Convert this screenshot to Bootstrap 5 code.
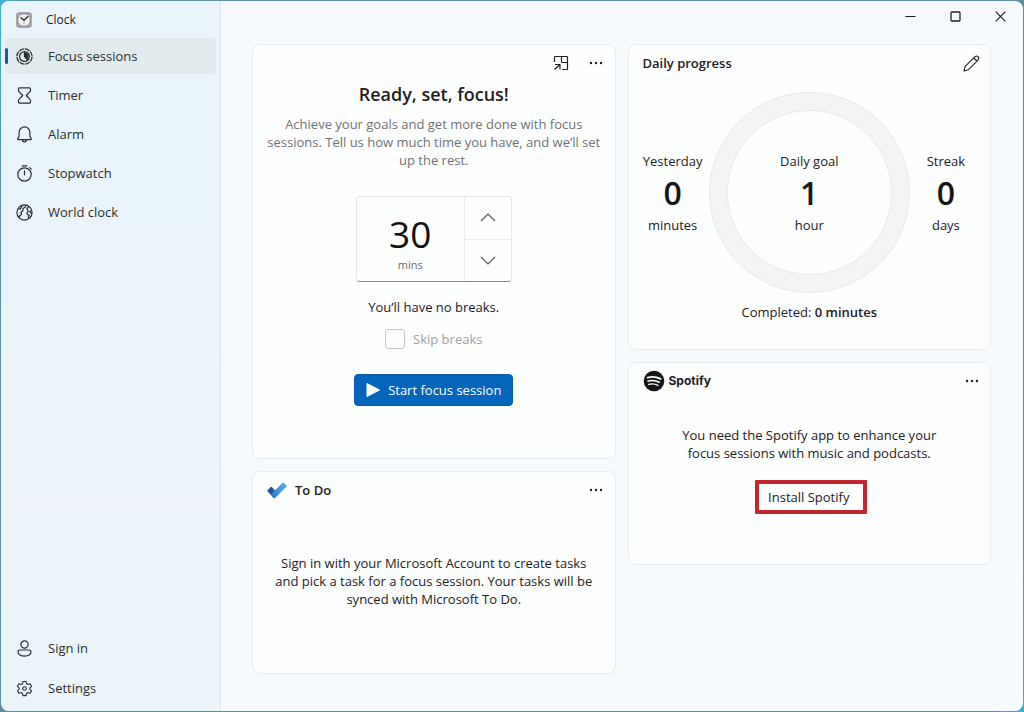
<!DOCTYPE html>
<html lang="en">
<head>
<meta charset="utf-8">
<meta name="viewport" content="width=device-width, initial-scale=1">
<title>Clock</title>
<link href="https://cdn.jsdelivr.net/npm/bootstrap@5.3.0/dist/css/bootstrap.min.css" rel="stylesheet">
<style>
  body { background: linear-gradient(100deg, #3fb3cf 0, #5a8f9c 3%, #5a8f9c 97%, #2fb4cc 100%); font-family: "Open Sans", "Noto Sans", sans-serif; font-size: 13px; line-height: 18px; color: #1f2021; padding: 1px; }
  svg { fill: none; stroke: currentColor; flex-shrink: 0; display: block; }
  .window { min-height: calc(100vh - 2px); border-radius: 8px; overflow: hidden; background: #f6fafd; }
  .sidebar { width: 220px; background: linear-gradient(#e9f4fb, #eaf4fa 35%, #eef4f9 70%, #eaf4f9); border-right: 1px solid #dde5ec; padding: 0 4px 5px; }
  .app-title { height: 37px; padding-left: 11px; gap: 14px; font-size: 12px; }
  .side-link { height: 36px; padding: 0 11px; gap: 15px; border-radius: 4px; color: #2b2e30; text-decoration: none; }
  .side-link:hover, .side-link.active { background: #e1ebed; }
  .side-link.active::before { content: ""; position: absolute; left: 0; width: 3px; height: 16px; border-radius: 2px; background: #0f5ea8; }
  .side-list { gap: 3px; }
  .side-foot { gap: 4px; }
  .cap-btn { width: 45px; height: 31px; color: #222; }
  .plain-btn { border: 0; background: none; padding: 0; display: flex; align-items: center; justify-content: center; color: #1e1f20; }
  .plain-btn:hover { background: #00000010; }
  .board { padding: 12px 32px 32px 31px; gap: 12px; }
  .stack { flex: 1 1 0; min-width: 0; gap: 12px; }
  .tile { background: #fdfefe; border: 1px solid #e6ebf0; border-radius: 8px; }
  .tile-focus { min-height: 415px; }
  .tile-todo { min-height: 203px; }
  .tile-daily { min-height: 306px; }
  .tile-music { min-height: 203px; }
  .tile-head { height: 36px; padding: 0 1px 0 14px; }
  .tile-head .plain-btn { width: 35px; height: 36px; }
  h1 { font-size: 18px; line-height: 26px; font-weight: 600; margin: 0 0 8px; }
  h2 { font-size: 13px; line-height: 18px; font-weight: 600; margin: 0; }
  .intro { color: #707274; margin: 0 0 27px; padding: 0 8px; }
  .spin { width: 156px; height: 86px; border: 1px solid #e6e7e8; border-bottom-color: #8a8b8c; border-radius: 4px; margin-bottom: 16px; }
  .spin-value { width: 108px; padding-top: 14px; border-right: 1px solid #ebecec; }
  .spin-value input { width: 100%; height: 46px; border: 0; padding: 0; background: none; text-align: center; font-size: 37px; line-height: 46px; color: #111; }
  .spin-value label { font-size: 11px; line-height: 16px; color: #66686a; display: block; }
  .spin-up { border-bottom: 1px solid #ebecec !important; }
  .skip { margin-top: 13px; gap: 8px; color: #a0a2a3; }
  .skip .form-check-input { width: 20px; height: 20px; margin: 0; border-color: #c2c4c5; opacity: 1; background-color: #fdfefe; }
  .skip .form-check-label { opacity: 1 !important; }
  .start-btn { margin-top: 25px; height: 32px; width: 159px; gap: 8px; border: 1px solid #0a5cab; border-radius: 4px; background: #0466ba; color: #fff; font-size: 13px; line-height: 18px; padding: 0; }
  .start-btn:hover { background: #1a74c0; color: #fff; }
  .stats { padding: 0 8px; margin-top: 11px; }
  .stats > .side-stat { flex: 1 1 0; }
  .ring { width: 201px; height: 201px; border-radius: 50%; background: #f3f4f4; border: 1px solid #e8e9e9; padding: 17px; }
  .ring-hole { border-radius: 50%; background: #fdfefe; border: 1px solid #e8e9e9; }
  .big { font-size: 32px; line-height: 46px; font-weight: 600; color: #151617; }
  .done { margin: 10px 0 0; }
  .music-word { font-family: Inter, "Open Sans", sans-serif; font-size: 12px; font-weight: 700; }
  .todo-text { margin: 46px 16px 0; }
  .music-text { margin: 27px 40px 0; }
  .install-btn { margin: 18px 0 0 4px; border: 4px solid #c4262e; padding: 0 14px 0 9px; height: 34px; background: #fdfefe; border-radius: 1px; color: #1b1c1d; }
</style>
</head>
<body>
<div class="window d-flex">
  <nav class="sidebar d-flex flex-column flex-shrink-0" aria-label="Main">
    <div class="app-title d-flex align-items-center">
      <svg width="16" height="16" viewBox="0 0 16 16"><rect x="1" y="1" width="14" height="14" rx="1.500" fill="#b9b7bc" stroke="#6b6b70"/><circle cx="8" cy="8" r="6.200" fill="#f4f1f2" stroke="#8a888c" stroke-width=".7"/><path d="M4.500 5.500 8 8.300l4.200-4" stroke="#333" stroke-width="1.300"/><path d="M8 8.300v4" stroke="#b77" stroke-width=".7"/></svg>
      <span>Clock</span>
    </div>
    <div class="side-list d-flex flex-column">
      <a href="#" class="side-link active d-flex align-items-center position-relative" aria-current="page">
        <svg width="17" height="17" viewBox="0 0 17 17" stroke-width="1.300"><circle cx="8.500" cy="8.500" r="7.600" stroke-dasharray="5.200 .77"/><circle cx="8.500" cy="8.500" r="4.900"/><path d="M8.500 4.200a4.300 4.300 0 0 1 3 7.300L8.500 8.500z" fill="currentColor" stroke="none"/><path d="M8.500 4.200v4.300l3 3.300"/></svg>Focus sessions</a>
      <a href="#" class="side-link d-flex align-items-center">
        <svg width="17" height="17" viewBox="0 0 17 17" stroke-width="1.200" stroke-linejoin="round"><path d="M3.500.9h10q1 0 1 1v1.300q0 1-.7 1.700L10.300 8.500l3.500 3.600q.7.700.7 1.700v1.300q0 1-1 1h-10q-1 0-1-1v-1.300q0-1 .7-1.700l3.500-3.600-3.500-3.600q-.7-.7-.7-1.700V1.900q0-1 1-1z"/></svg>Timer</a>
      <a href="#" class="side-link d-flex align-items-center">
        <svg width="17" height="17" viewBox="0 0 17 17" stroke-width="1.200" stroke-linejoin="round"><path d="M8.500.9a5.400 5.400 0 0 1 5.400 5.400v3.900l1.400 2.700q.2.700-.5.700H2.200q-.7 0-.5-.7l1.400-2.700V6.300A5.400 5.400 0 0 1 8.500.9zM6.500 13.800a2 2 0 0 0 4 0"/></svg>Alarm</a>
      <a href="#" class="side-link d-flex align-items-center">
        <svg width="17" height="17" viewBox="0 0 17 17" stroke-width="1.200" stroke-linecap="round"><circle cx="8.500" cy="9.500" r="6.700"/><path d="M8.500 5.800v4M6.200.9h4.600M13.700 2.600l1.600 1.500"/></svg>Stopwatch</a>
      <a href="#" class="side-link d-flex align-items-center">
        <svg width="17" height="17" viewBox="0 0 17 17" stroke-width="1.200" stroke-linejoin="round"><circle cx="8.500" cy="8.500" r="7.600"/><path d="M9.800 1.100 9.300 3 7 4.500 6.800 6.800 4.900 8.500l.7 1.800L3.500 12l-.4 1.700M2 4.500l2 .8 2.300-3.900M12.800 2.500l-2 2.400 1.500 2.200-1.500 2 .8 1.600 1.700.5-.9 1.600.5 1.500M15.700 6.500l-2 1.300 2 2"/></svg>World clock</a>
    </div>
    <div class="side-foot d-flex flex-column mt-auto">
      <a href="#" class="side-link d-flex align-items-center">
        <svg width="17" height="17" viewBox="0 0 17 17" stroke-width="1.200"><circle cx="8.500" cy="4.500" r="3.600"/><path d="M3.700 10h9.600q1.700 0 1.700 1.600c0 3-3 4.500-6.500 4.500S2 14.600 2 11.600Q2 10 3.700 10z"/></svg>Sign in</a>
      <a href="#" class="side-link d-flex align-items-center">
        <svg width="17" height="17" viewBox="0 0 17 17" stroke-width="1.100" stroke-linejoin="round"><circle cx="8.500" cy="8.500" r="1.800"/><path d="M7 1.500h3l.5 2.200 1.400.8 2.200-.7 1.500 2.500-1.700 1.500v1.500l1.700 1.500-1.500 2.500-2.200-.7-1.400.8-.5 2.200H7l-.5-2.200-1.400-.8-2.200.7-1.500-2.500 1.700-1.500V7.800L1.400 6.300l1.500-2.500 2.200.7 1.400-.8z"/></svg>Settings</a>
    </div>
  </nav>

  <main class="flex-grow-1">
    <div class="d-flex justify-content-end">
      <button class="plain-btn cap-btn" aria-label="Minimize"><svg width="11" height="11" viewBox="0 0 11 11"><path d="M.5 5.500h10" stroke-width="1.200"/></svg></button>
      <button class="plain-btn cap-btn" aria-label="Maximize"><svg width="11" height="11" viewBox="0 0 11 11"><rect x="1" y="1" width="9" height="9" rx="1" stroke-width="1.300"/></svg></button>
      <button class="plain-btn cap-btn" aria-label="Close"><svg width="11" height="11" viewBox="0 0 11 11"><path d="m.7.7 9.600 9.600m0-9.600L.7 10.300" stroke-width="1.200"/></svg></button>
    </div>
    <div class="board d-flex align-items-start">
      <div class="stack d-flex flex-column">
        <section class="tile tile-focus d-flex flex-column align-items-center text-center">
          <div class="tile-head d-flex justify-content-end align-items-center align-self-stretch">
            <button class="plain-btn" aria-label="Keep on top"><svg width="16" height="16" viewBox="0 0 16 16" stroke-width="1.200" stroke-linejoin="round"><path d="M1.500 7V2.200q0-.7.700-.7h11.600q.7 0 .7.700v11.600q0 .7-.7.700H9.200M8.500 1.500v5q0 1 1 1h5M1.500 14.500l5-4.500M2 9.500h5v5"/></svg></button>
            <button class="plain-btn" aria-label="More options"><svg width="14" height="4" viewBox="0 0 14 4"><g fill="currentColor" stroke="none"><circle cx="2" cy="2" r="1.200"/><circle cx="7" cy="2" r="1.200"/><circle cx="12" cy="2" r="1.200"/></g></svg></button>
          </div>
          <h1>Ready, set, focus!</h1>
          <p class="intro">Achieve your goals and get more done with focus sessions. Tell us how much time you have, and we’ll set up the rest.</p>
          <div class="spin d-flex">
            <div class="spin-value"><input id="mins" type="text" value="30" inputmode="numeric"><label for="mins">mins</label></div>
            <div class="d-flex flex-column flex-grow-1">
              <button class="plain-btn spin-up flex-fill" aria-label="Increase"><svg width="16" height="9" viewBox="0 0 16 9"><path d="m1 8 7-7 7 7" stroke="#555" stroke-width="1.200"/></svg></button>
              <button class="plain-btn flex-fill" aria-label="Decrease"><svg width="16" height="9" viewBox="0 0 16 9"><path d="m1 1 7 7 7-7" stroke="#555" stroke-width="1.200"/></svg></button>
            </div>
          </div>
          <div>You’ll have no breaks.</div>
          <div class="skip d-flex align-items-center">
            <input class="form-check-input" type="checkbox" id="skip" disabled><label class="form-check-label" for="skip">Skip breaks</label>
          </div>
          <button class="btn start-btn d-flex align-items-center justify-content-center"><svg width="14" height="16" viewBox="0 0 14 16"><path d="M1 1.500v13L13.500 8z" fill="#fff" stroke="#fff" stroke-linejoin="round"/></svg>Start focus session</button>
        </section>

        <section class="tile tile-todo text-center">
          <div class="tile-head d-flex align-items-center">
            <svg width="20" height="17" viewBox="0 0 20 17"><defs><linearGradient id="tick" x1="0" y1="1" x2="1" y2="0"><stop offset="0" stop-color="#2577c9"/><stop offset="1" stop-color="#5eb4ea"/></linearGradient></defs><g stroke="none"><path d="M.5 8.200 3.700 5q.5-.5 1 0l6.300 6.300L7.500 16q-.5.300-.8 0L.5 9.200q-.5-.5 0-1z" fill="#1f559f"/><path d="M4.200 12.100 15.700.8q.5-.5 1 0l2.800 2.800q.5.500 0 1L8 16q-.5.500-1 0z" fill="url(#tick)"/></g></svg>
            <h2 class="ms-2">To Do</h2>
            <button class="plain-btn ms-auto" aria-label="More options"><svg width="14" height="4" viewBox="0 0 14 4"><g fill="currentColor" stroke="none"><circle cx="2" cy="2" r="1.200"/><circle cx="7" cy="2" r="1.200"/><circle cx="12" cy="2" r="1.200"/></g></svg></button>
          </div>
          <p class="todo-text">Sign in with your Microsoft Account to create tasks and pick a task for a focus session. Your tasks will be synced with Microsoft To Do.</p>
        </section>
      </div>

      <div class="stack d-flex flex-column">
        <section class="tile tile-daily text-center">
          <div class="tile-head d-flex align-items-center">
            <h2>Daily progress</h2>
            <button class="plain-btn ms-auto" aria-label="Edit goal"><svg width="17" height="17" viewBox="0 0 17 17" stroke-width="1.100" stroke-linejoin="round"><path d="M1 16l1.200-4.600L12 1.700q1.600-1.300 3 0 1.500 1.500.2 3.100l-9.700 9.900zM10.800 3l3.200 3.200"/></svg></button>
          </div>
          <div class="stats d-flex align-items-center">
            <div class="side-stat"><div>Yesterday</div><div class="big">0</div><div>minutes</div></div>
            <div class="ring flex-shrink-0"><div class="ring-hole h-100 d-flex flex-column justify-content-center"><div>Daily goal</div><div class="big">1</div><div>hour</div></div></div>
            <div class="side-stat"><div>Streak</div><div class="big">0</div><div>days</div></div>
          </div>
          <p class="done">Completed: <b class="fw-semibold">0 minutes</b></p>
        </section>

        <section class="tile tile-music text-center">
          <div class="tile-head d-flex align-items-center">
            <svg width="22" height="22" viewBox="0 0 22 22"><circle cx="11" cy="11" r="10.300" fill="#161616" stroke="none"/><g stroke="#fdfefe" stroke-linecap="round"><path d="M4.600 7.600q6.800-1.900 13 1.300" stroke-width="1.900"/><path d="M5.100 11.100q5.800-1.600 11.200 1.100" stroke-width="1.600"/><path d="M5.600 14.300q5-1.300 9.400 1" stroke-width="1.300"/></g></svg>
            <span class="music-word ms-1">Spotify</span>
            <button class="plain-btn ms-auto" aria-label="More options"><svg width="14" height="4" viewBox="0 0 14 4"><g fill="currentColor" stroke="none"><circle cx="2" cy="2" r="1.200"/><circle cx="7" cy="2" r="1.200"/><circle cx="12" cy="2" r="1.200"/></g></svg></button>
          </div>
          <p class="music-text">You need the Spotify app to enhance your focus sessions with music and podcasts.</p>
          <button class="install-btn">Install Spotify</button>
        </section>
      </div>
    </div>
  </main>
</div>
<script src="https://cdn.jsdelivr.net/npm/bootstrap@5.3.0/dist/js/bootstrap.bundle.min.js"></script>
</body>
</html>
